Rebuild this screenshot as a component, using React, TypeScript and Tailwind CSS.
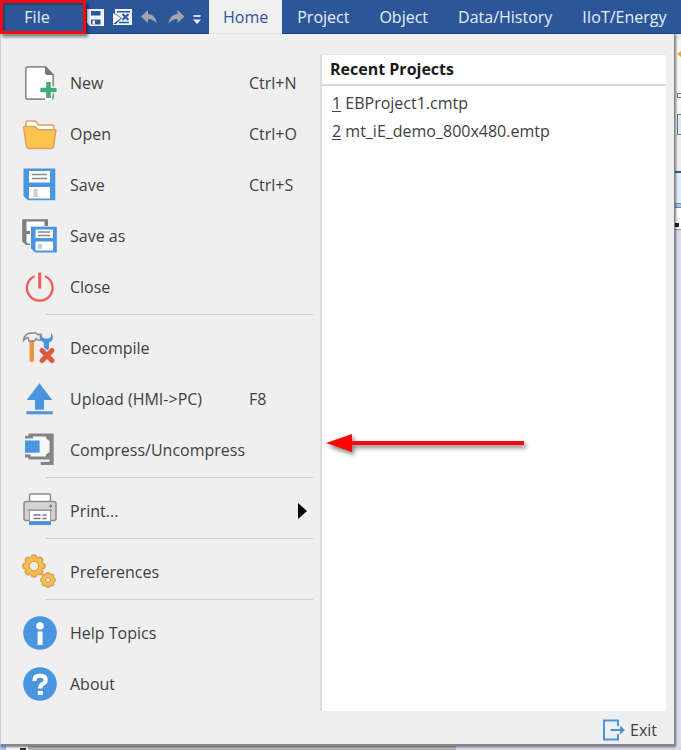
import type { ReactNode } from "react";

const BLUE = "#4a95e0";

function Icon({ children }: { children: ReactNode }) {
  return (
    <svg viewBox="0 0 36 36" className="size-9 shrink-0" fill="none" aria-hidden="true">
      {children}
    </svg>
  );
}

function NewIcon() {
  return (
    <Icon>
      <path d="M6 1.8H23.5L31.2 10V32a2.2 2.2 0 0 1-2.2 2.2H6A2.2 2.2 0 0 1 3.8 32V4A2.2 2.2 0 0 1 6 1.8Z" fill="#fff" stroke="#8e8e8e" strokeWidth="1.7" />
      <path d="M23 1L32 10H25a2 2 0 0 1-2-2Z" fill="#777" />
      <path d="M23 15.5H30V21.5H36V28.5H30V35H23V28.5H17V21.5H23Z" fill="#fff" />
      <path d="M24.2 17H28.8V22.8H34.6V27.2H28.8V33H24.2V27.2H18.4V22.8H24.2Z" fill="#3fae7c" />
    </Icon>
  );
}

function OpenIcon() {
  return (
    <Icon>
      <path d="M4 12V7a2 2 0 0 1 2-2h6q2 0 3 1.700L16.500 9H30a2 2 0 0 1 2 2v3H4Z" fill="#fff" stroke="#dca264" strokeWidth="1.600" />
      <path d="M2.500 10.500H12q1.500 0 2.500 1.500l1.500 1.800H33q1 0 .8 1L31.500 30.500q-.3 2-2 2H6.600q-1.700 0-2-2L1.600 12q-.1-1.500.9-1.500Z" fill="#fdc450" stroke="#dba05c" strokeWidth="1.500" />
    </Icon>
  );
}

function SaveIcon() {
  return (
    <Icon>
      <path d="M1.500 1.500H33.300V33.300H6L1.500 29Z" fill={BLUE} />
      <path d="M7 4H28V15.500H7ZM7 20H28V31.500H7Z" fill="#fff" />
      <path d="M10 7.500H25M10 11.500H25" stroke="#8b8b8b" strokeWidth="1.500" />
      <path d="M11.500 22H15.800V30H11.500Z" fill="#cfcfcf" />
    </Icon>
  );
}

function SaveAsIcon() {
  return (
    <Icon>
      <path d="M.2 1.300H26V27H4L.2 23.500Z" fill="#7e7e7e" />
      <path d="M4.500 3.500H22.500V13H4.500ZM4.500 16H12V25.500H5.500L4.500 24Z" fill="#fff" />
      <path d="M8 8H35.300V35H12.500L8 31Z" fill="#eee" />
      <path d="M9 8.800H34.800V34.400H13L9 30.500Z" fill={BLUE} />
      <path d="M13.500 11.500H31V20H13.500ZM13.500 23.500H31V32.500H13.500Z" fill="#fff" />
      <path d="M16 14H28M16 17.500H28" stroke="#888" strokeWidth="1.300" />
      <path d="M16 26H20V31H16Z" fill="#ccc" />
    </Icon>
  );
}

function CloseIcon() {
  return (
    <Icon>
      <path d="M12.500 7.200A12.800 12.800 0 1 0 23 7.200" stroke="#f25858" strokeWidth="2.300" />
      <path d="M17.700 3.500V19.500" stroke="#f25858" strokeWidth="3" />
    </Icon>
  );
}

function DecompileIcon() {
  return (
    <Icon>
      <path d="M7.500 11H12V30.500q0 1.500-2.200 1.500T7.500 30.500Z" fill="#e99543" />
      <path d="M1.500 10.500C2 6 5 3 9.500 3H14l1.500 1.500H18.500V10H15.500L14 8.500 12.500 11H7L6 7.500Q3.500 8 1.500 10.500Z" fill="#ededed" stroke="#858585" strokeWidth="1.300" />
      <path d="M19.500 2.700Q17 5 17.800 8q1 3.500 4 4.500V20H27V12.500q3.500-1 4-4.500.5-3-2-5.300V7L26.500 8.500H22.500L20 7Z" fill={BLUE} />
      <path d="M20 20.500L30 30.500M30 20.500L20 30.500" stroke="#eee" strokeWidth="7" strokeLinecap="round" />
      <path d="M20 20.500L30 30.500M30 20.500L20 30.500" stroke="#dd5c40" strokeWidth="5" strokeLinecap="round" />
    </Icon>
  );
}

function UploadIcon() {
  return (
    <Icon>
      <path d="M17.500 2.300L30.300 19H22V28.800H13V19H4.700Z" fill={BLUE} />
      <path d="M4.300 30.200H30.700V33.300H4.300Z" fill={BLUE} />
    </Icon>
  );
}

function CompressIcon() {
  return (
    <Icon>
      <path d="M8 4H28V25H8Z" fill="#f7f7f7" />
      <path d="M3 3.700H6.500V1.500H31.700V33H18.700V30H27.500V27.500H6.500V25.500H3V22.500H8.500V24.500H24V22.500L27.500 20V9L24 6.500V4.500H11V6.500H3Z" fill="#858585" />
      <path d="M3 8.500H17.600V20.700H3Z" fill={BLUE} />
    </Icon>
  );
}

function PrintIcon() {
  return (
    <Icon>
      <path d="M7.500 9V2.500q0-1.500 1.500-1.500H27q1.500 0 1.500 1.500V9" fill="#fff" stroke="#8a8a8a" strokeWidth="1.500" />
      <rect x="2" y="8.500" width="32" height="19" rx="2" fill="#d3d3d3" stroke="#8a8a8a" strokeWidth="1.500" />
      <circle cx="28.800" cy="13" r="1.600" fill="#858585" />
      <path d="M6 17.200H30" stroke="#8a8a8a" strokeWidth="1.500" />
      <path d="M7.500 17.500H28.500V28.500H7.500Z" fill="#fff" stroke="#9a9a9a" />
      <path d="M11.500 22H18.500M20.500 22H24.500M11.500 25.500H18.500M20.500 25.500H24.500" stroke="#777" strokeWidth="1.300" />
      <path d="M7 28.300H29V32H7Z" fill={BLUE} />
    </Icon>
  );
}

function Gear({ x, y, r, hole }: { x: number; y: number; r: number; hole: number }) {
  const teeth = [0, 45, 90, 135, 180, 225, 270, 315];
  return (
    <g transform={`translate(${x} ${y})`}>
      {teeth.map((a) => (
        <circle key={a} cx="0" cy={-r * 0.76} r={r * 0.24} transform={`rotate(${a})`} fill="#fbbf48" stroke="#d9a059" strokeWidth="1.600" />
      ))}
      <circle r={r * 0.78} fill="#fbbf48" />
      <circle r={hole} fill="#eee" stroke="#d9a059" strokeWidth="1.300" />
    </g>
  );
}

function PreferencesIcon() {
  return (
    <Icon>
      <Gear x={12} y={12} r={11} hole={4.8} />
      <Gear x={26} y={26} r={7.2} hole={2.4} />
    </Icon>
  );
}

function HelpIcon() {
  return (
    <Icon>
      <circle cx="18" cy="18" r="16.800" fill={BLUE} />
      <circle cx="18" cy="11" r="3.800" fill="#fff" />
      <path d="M15.600 16.500H20.600V30H15.600Z" fill="#fff" />
    </Icon>
  );
}

function AboutIcon() {
  return (
    <Icon>
      <circle cx="18" cy="18" r="16.800" fill={BLUE} />
      <path d="M12.200 14.800Q12.500 9.700 18 9.700T23.700 14Q23.700 16.500 20.800 18Q18.200 19.200 18.200 22.500" stroke="#fff" strokeWidth="4.200" />
      <path d="M15.800 24.800H20.800V29H15.800Z" fill="#fff" />
    </Icon>
  );
}

type Item = { label: string; keys?: string; icon: ReactNode; submenu?: boolean };

const groups: Item[][] = [
  [
    { label: "New", keys: "Ctrl+N", icon: <NewIcon /> },
    { label: "Open", keys: "Ctrl+O", icon: <OpenIcon /> },
    { label: "Save", keys: "Ctrl+S", icon: <SaveIcon /> },
    { label: "Save as", icon: <SaveAsIcon /> },
    { label: "Close", icon: <CloseIcon /> },
  ],
  [
    { label: "Decompile", icon: <DecompileIcon /> },
    { label: "Upload (HMI->PC)", keys: "F8", icon: <UploadIcon /> },
    { label: "Compress/Uncompress", icon: <CompressIcon /> },
  ],
  [{ label: "Print...", icon: <PrintIcon />, submenu: true }],
  [{ label: "Preferences", icon: <PreferencesIcon /> }],
  [
    { label: "Help Topics", icon: <HelpIcon /> },
    { label: "About", icon: <AboutIcon /> },
  ],
];

const tabs = ["Project", "Object", "Data/History", "IIoT/Energy"];
const recent = ["EBProject1.cmtp", "mt_iE_demo_800x480.emtp"];

function QuickAccess() {
  return (
    <div className="flex h-full w-[123px] shrink-0 items-center">
      <button aria-label="Save project" className="h-5 w-[26px]">
        <svg viewBox="0 0 26 20" className="h-5 w-[26px]" aria-hidden="true">
          <path d="M1 2H18V19H4L1 16Z" fill="#f1f5fb" />
          <path d="M5 4H14.500V8.500H5ZM5 12.500H14.500V17.500H5Z" fill="#2b579a" />
          <path d="M6.500 13.500H9V17.500H6.500Z" fill="#f1f5fb" />
        </svg>
      </button>
      <button aria-label="Simulate" className="h-5 w-[26px]">
        <svg viewBox="0 0 26 20" className="h-5 w-[26px]" aria-hidden="true">
          <path d="M3 2H20V18H1V6H3Z" fill="#f1f5fb" />
          <path d="M5 4H18V5.500H5ZM1 5L10 11 4 17H1Z" fill="#2b579a" />
          <path d="M1 6L9 11 1 17Z" fill="#fff" />
          <path d="M10.500 7L16.500 13M16.500 7L10.500 13" stroke="#2b579a" strokeWidth="2" />
          <path d="M7 15.500H17" stroke="#2b579a" strokeWidth="1.500" />
        </svg>
      </button>
      <button aria-label="Undo" className="h-5 w-[27px]">
        <svg viewBox="0 0 27 20" className="h-5 w-[27px]" aria-hidden="true">
          <path d="M3 9.500L10 3V7Q18 7.500 18.500 16.500Q15.500 12 10 12V16Z" fill="#a3a5aa" />
        </svg>
      </button>
      <button aria-label="Redo" className="h-5 w-[25px]">
        <svg viewBox="0 0 25 20" className="h-5 w-[25px]" aria-hidden="true">
          <path d="M19.500 9.500L12.500 3V7Q4.500 7.500 3.500 16.500Q7 12 12.500 12V16Z" fill="#a3a5aa" />
        </svg>
      </button>
      <button aria-label="Customize toolbar" className="h-5 w-[14px]">
        <svg viewBox="0 0 14 20" className="h-5 w-[14px]" aria-hidden="true">
          <path d="M3.500 9H10.500" stroke="#f1f5fb" strokeWidth="1.700" />
          <path d="M3 12.500H11L7 17Z" fill="#f1f5fb" />
        </svg>
      </button>
    </div>
  );
}

function Ribbon() {
  return (
    <header className="flex h-[34px] w-full items-center overflow-visible border-b border-[#20478a] bg-[#2b579a] text-[16px] text-[#e8eef8]">
      <button className="relative z-10 h-[34px] w-[86px] shrink-0 border-[3px] border-[#f00c10] pr-3 shadow-[2px_3px_3px_rgba(0,0,0,0.45),inset_2px_2px_2px_rgba(0,0,0,0.25)]">
        File
      </button>
      <QuickAccess />
      <nav className="flex h-[34px] min-w-0 flex-1 overflow-hidden whitespace-nowrap">
        <button className="shrink-0 bg-[#f0f0f0] px-3.5 text-[#31549b]">Home</button>
        {tabs.map((t) => (
          <button key={t} className="shrink-0 px-[15px]">
            {t}
          </button>
        ))}
      </nav>
    </header>
  );
}

function MenuRow({ item }: { item: Item }) {
  return (
    <button className="flex h-[51px] w-full items-center pl-[21px] pr-3 text-left">
      {item.icon}
      <span className="ml-3 flex-1 whitespace-nowrap">{item.label}</span>
      {item.keys && <span className="w-[59px]">{item.keys}</span>}
      {item.submenu && (
        <svg viewBox="0 0 10 18" className="h-[18px] w-2.5" aria-hidden="true">
          <path d="M0 1L9 9 0 17Z" fill="#000" />
        </svg>
      )}
    </button>
  );
}

function RecentProjects() {
  return (
    <section className="relative mr-2 mt-5 min-w-0 flex-1 border-l-2 border-t border-[#dcdcdc] border-t-[#e6e6e6] bg-white">
      <h2 className="border-b-2 border-[#d6d6d6] pb-0.5 pt-0.5 pl-2 text-[16px] font-bold leading-[25px] text-[#1b1b1b]">
        Recent Projects
      </h2>
      <ol className="pl-2.5 pt-[3px]">
        {recent.map((name, i) => (
          <li key={name}>
            <a href="#" className="block leading-7">
              <span className="underline underline-offset-2">{i + 1}</span> {name}
            </a>
          </li>
        ))}
      </ol>
      <svg viewBox="0 0 206 34" className="absolute left-[3px] top-[375px] h-[34px] w-[206px]" aria-hidden="true">
        <path d="M1 13L27 4V11H199V15H27V22Z" fill="#ff0505" className="drop-shadow-[2px_3px_2px_rgba(0,0,0,0.5)]" />
      </svg>
    </section>
  );
}

function WindowEdge() {
  return (
    <aside className="flex w-[6px] shrink-0 flex-col bg-[#dcdcef]" aria-hidden="true">
      <div className="h-[5px] bg-[#e8e8e8]" />
      <div className="flex h-24 flex-col bg-[#f5f5f5] pl-0.5 pt-3">
        <svg viewBox="0 0 4 6" className="h-1.5 w-1">
          <path d="M0 3L4 0V6Z" fill="#e9a64a" />
        </svg>
        <div className="mt-9 h-[5px] border border-r-0 border-[#777]" />
        <div className="mt-4 h-[21px] border border-r-0 border-[#777] bg-[#dceaf8]" />
      </div>
      <div className="h-[38px] border-b-2 border-[#2b579a] bg-[#ededed]" />
      <div className="h-[30px] bg-[#e3eefb]" />
      <div className="h-[5px] border-y border-[#888] bg-[#9fc9f3]" />
      <div className="h-[22px] border-b border-[#999] bg-white pt-[15px]">
        <div className="h-1 w-1 bg-[#222]" />
      </div>
    </aside>
  );
}

export default function App() {
  return (
    <div className="flex w-full flex-col overflow-hidden bg-[#b9b9b9] font-['Open_Sans','Noto_Sans',sans-serif] text-[16px] text-[#404040]">
      <Ribbon />
      <div className="flex">
        <main className="relative flex min-w-0 flex-1 flex-col border-x border-b-2 border-[#cfcfcf] border-b-[#85858a] border-r-[#85858a] bg-[#efefef] shadow-[1px_1px_2px_rgba(0,0,0,0.5)]">
          <div className="flex">
            <div role="menu" className="w-[319px] shrink-0 pb-0.5 pt-[23px]">
              {groups.map((group, i) => (
                <div key={group[0].label}>
                  {i > 0 && <hr className="mb-[7px] ml-[45px] mr-[7px] mt-0.5 border-[#cfcfcf]" />}
                  {group.map((item) => (
                    <MenuRow key={item.label} item={item} />
                  ))}
                </div>
              ))}
            </div>
            <RecentProjects />
          </div>
          <footer className="flex h-[33px] justify-end pr-[17px]">
            <button className="flex items-center gap-1 pt-1">
              <svg viewBox="0 0 24 24" className="size-6" fill="none" stroke={BLUE} strokeWidth="2" aria-hidden="true">
                <path d="M16 8V2.500H2V21.500H16V16M8.500 12H21" />
                <path d="M18 7.500L23 12 18 16.500Z" fill={BLUE} stroke="none" />
              </svg>
              Exit
            </button>
          </footer>
        </main>
        <WindowEdge />
      </div>
      <div className="flex h-[5px]" aria-hidden="true">
        <div className="w-1.5 bg-[#9fc5ea]" />
        <div className="flex w-[22px] justify-end bg-[#f4f4f4]">
          <div className="mr-0.5 mt-0.5 h-0.5 w-1.5 bg-[#333]" />
        </div>
        <div className="flex-1 bg-[#b6b6b6]" />
        <div className="w-[33%] bg-[#d9d8ea]" />
      </div>
    </div>
  );
}
